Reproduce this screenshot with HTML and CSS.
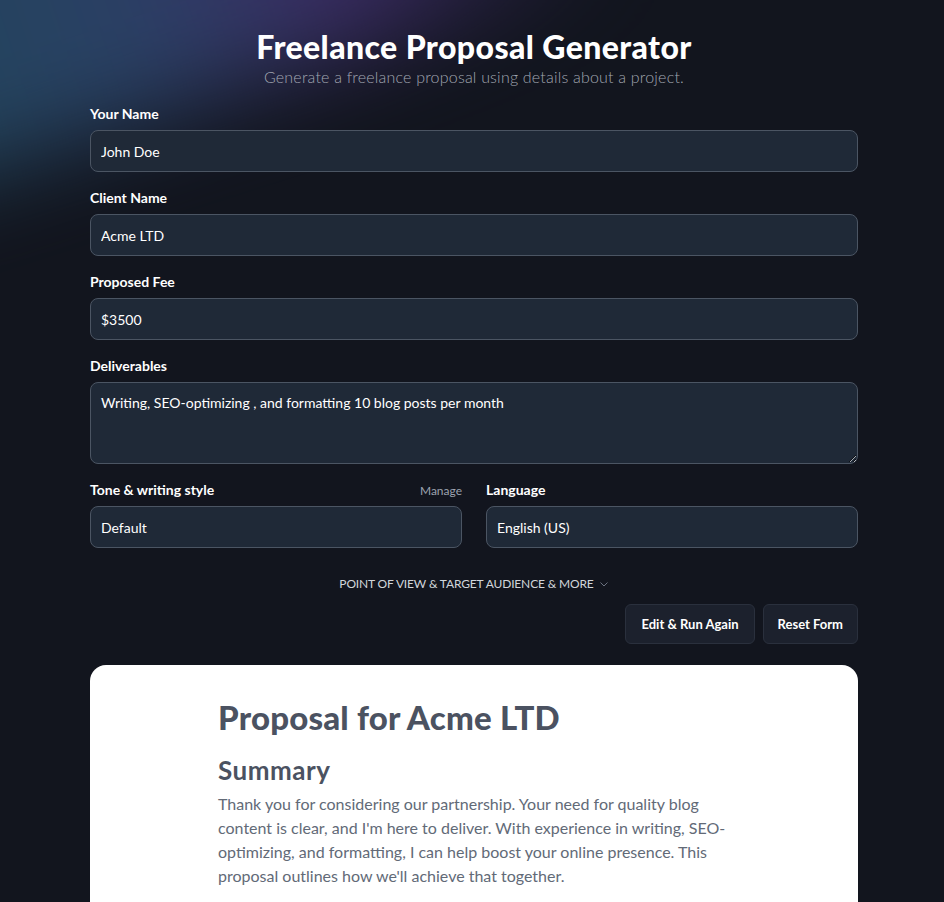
FILE: index.html
```html
<!DOCTYPE html>
<html lang="en">
<head>
    <meta charset="UTF-8">
    <meta name="viewport" content="width=device-width, initial-scale=1.0">
    <title>Freelance Proposal Generator</title>
    <link rel="stylesheet" href="styles.css">
</head>
<body>

<div class="glow"></div>

<main class="page">
    <header class="intro">
        <h1>Freelance Proposal Generator</h1>
        <p>Generate a freelance proposal using details about a project.</p>
    </header>

    <form class="form" id="proposalForm">
        <div class="field">
            <label for="yourName">Your Name</label>
            <input type="text" id="yourName" value="John Doe">
        </div>

        <div class="field">
            <label for="clientName">Client Name</label>
            <input type="text" id="clientName" value="Acme LTD">
        </div>

        <div class="field">
            <label for="fee">Proposed Fee</label>
            <input type="text" id="fee" value="$3500">
        </div>

        <div class="field">
            <label for="deliverables">Deliverables</label>
            <textarea id="deliverables" rows="3">Writing, SEO-optimizing , and formatting 10 blog posts per month</textarea>
        </div>

        <div class="field-row">
            <div class="field">
                <div class="label-row">
                    <label for="tone">Tone &amp; writing style</label>
                    <a href="#" class="manage">Manage</a>
                </div>
                <input type="text" id="tone" value="Default" readonly>
            </div>
            <div class="field">
                <label for="language">Language</label>
                <input type="text" id="language" value="English (US)" readonly>
            </div>
        </div>

        <button type="button" class="more">
            POINT OF VIEW &amp; TARGET AUDIENCE &amp; MORE
            <svg width="10" height="10" viewBox="0 0 10 10" fill="none" stroke="currentColor" stroke-width="1">
                <path d="M1.5 3.5 L5 7 L8.5 3.5"/>
            </svg>
        </button>

        <div class="actions">
            <button type="button" class="btn">Edit &amp; Run Again</button>
            <button type="reset" class="btn">Reset Form</button>
        </div>
    </form>

    <article class="result">
        <h1>Proposal for Acme LTD</h1>

        <h2>Summary</h2>
        <p>Thank you for considering our partnership. Your need for quality blog content is clear, and I'm here to deliver. With experience in writing, SEO-optimizing, and formatting, I can help boost your online presence. This proposal outlines how we'll achieve that together.</p>
    </article>
</main>

</body>
</html>
```

FILE: styles.css
```css
* {
    box-sizing: border-box;
}
body {
    margin: 0;
    background-color: #12151e;
    color: #f3f4f6;
    font-family: Lato, "Noto Sans", Arial, sans-serif;
    color-scheme: dark;
    overflow-x: hidden;
}
.glow {
    position: absolute;
    top: -250px;
    left: -170px;
    width: 760px;
    height: 340px;
    transform: rotate(-18deg);
    background: linear-gradient(90deg, #2a6782 0%, #3b5d94 36%, #553b90 64%, rgba(60, 40, 110, 0) 100%);
    filter: blur(46px);
    opacity: 0.6;
    pointer-events: none;
}
.page {
    position: relative;
    max-width: 768px;
    margin: 0 auto;
    padding: 29px 0 40px;
    left: 2px;
}
.intro {
    text-align: center;
}
.intro h1 {
    margin: 0;
    font-size: 32px;
    line-height: 36px;
    font-weight: 900;
    letter-spacing: 0.4px;
    color: #fff;
}
.intro p {
    margin: 0;
    font-size: 16px;
    line-height: 24px;
    font-weight: 300;
    letter-spacing: 0.2px;
    color: #a1a6b1;
}
.form {
    margin-top: 15px;
}
.field {
    display: flex;
    flex-direction: column;
    gap: 6px;
    margin-bottom: 16px;
}
.field label {
    font-size: 14px;
    line-height: 20px;
    font-weight: 700;
    color: #fff;
}
.field input, .field textarea {
    width: 100%;
    height: 42px;
    padding: 0 10px;
    background: #1f2937;
    border: 1px solid #4b5563;
    border-radius: 8px;
    color: #fff;
    font-family: inherit;
    font-size: 14px;
    outline: none;
}
.field textarea {
    height: 82px;
    padding: 10px;
    line-height: 20px;
    resize: vertical;
}
.field-row {
    display: grid;
    grid-template-columns: 1fr 1fr;
    gap: 24px;
}
.field-row .field {
    margin-bottom: 0;
}
.label-row {
    display: flex;
    justify-content: space-between;
    align-items: center;
}
.manage {
    font-size: 12px;
    color: #9ca3af;
    text-decoration: none;
}
.more {
    display: flex;
    align-items: center;
    gap: 5px;
    margin: 28px auto 0;
    padding: 0;
    background: none;
    border: none;
    color: #d1d5db;
    font-family: inherit;
    font-size: 12px;
    line-height: 16px;
    letter-spacing: -0.15px;
    cursor: pointer;
}
.more svg {
    color: #6b7280;
}
.actions {
    display: flex;
    justify-content: flex-end;
    gap: 8px;
    margin-top: 12px;
}
.btn {
    height: 40px;
    padding: 0 15px;
    background: #1c212d;
    border: 1px solid #2a303d;
    border-radius: 6px;
    color: #fff;
    font-family: inherit;
    font-size: 13px;
    font-weight: 700;
    cursor: pointer;
}
.btn:last-child {
    padding: 0 14px;
}
.btn:hover {
    background: #262d3b;
}
.result {
    margin-top: 21px;
    padding: 34px 128px 40px;
    background: #fff;
    border-radius: 16px;
}
.result h1 {
    margin: 0 0 19px;
    font-size: 33px;
    line-height: 36px;
    font-weight: 900;
    letter-spacing: 0.2px;
    color: #4b5261;
}
.result h2 {
    margin: 0 0 6px;
    font-size: 26px;
    line-height: 32px;
    font-weight: 700;
    letter-spacing: 0.5px;
    color: #4b5261;
}
.result p {
    margin: 0;
    font-size: 16px;
    line-height: 24px;
    color: #626a77;
}
```
